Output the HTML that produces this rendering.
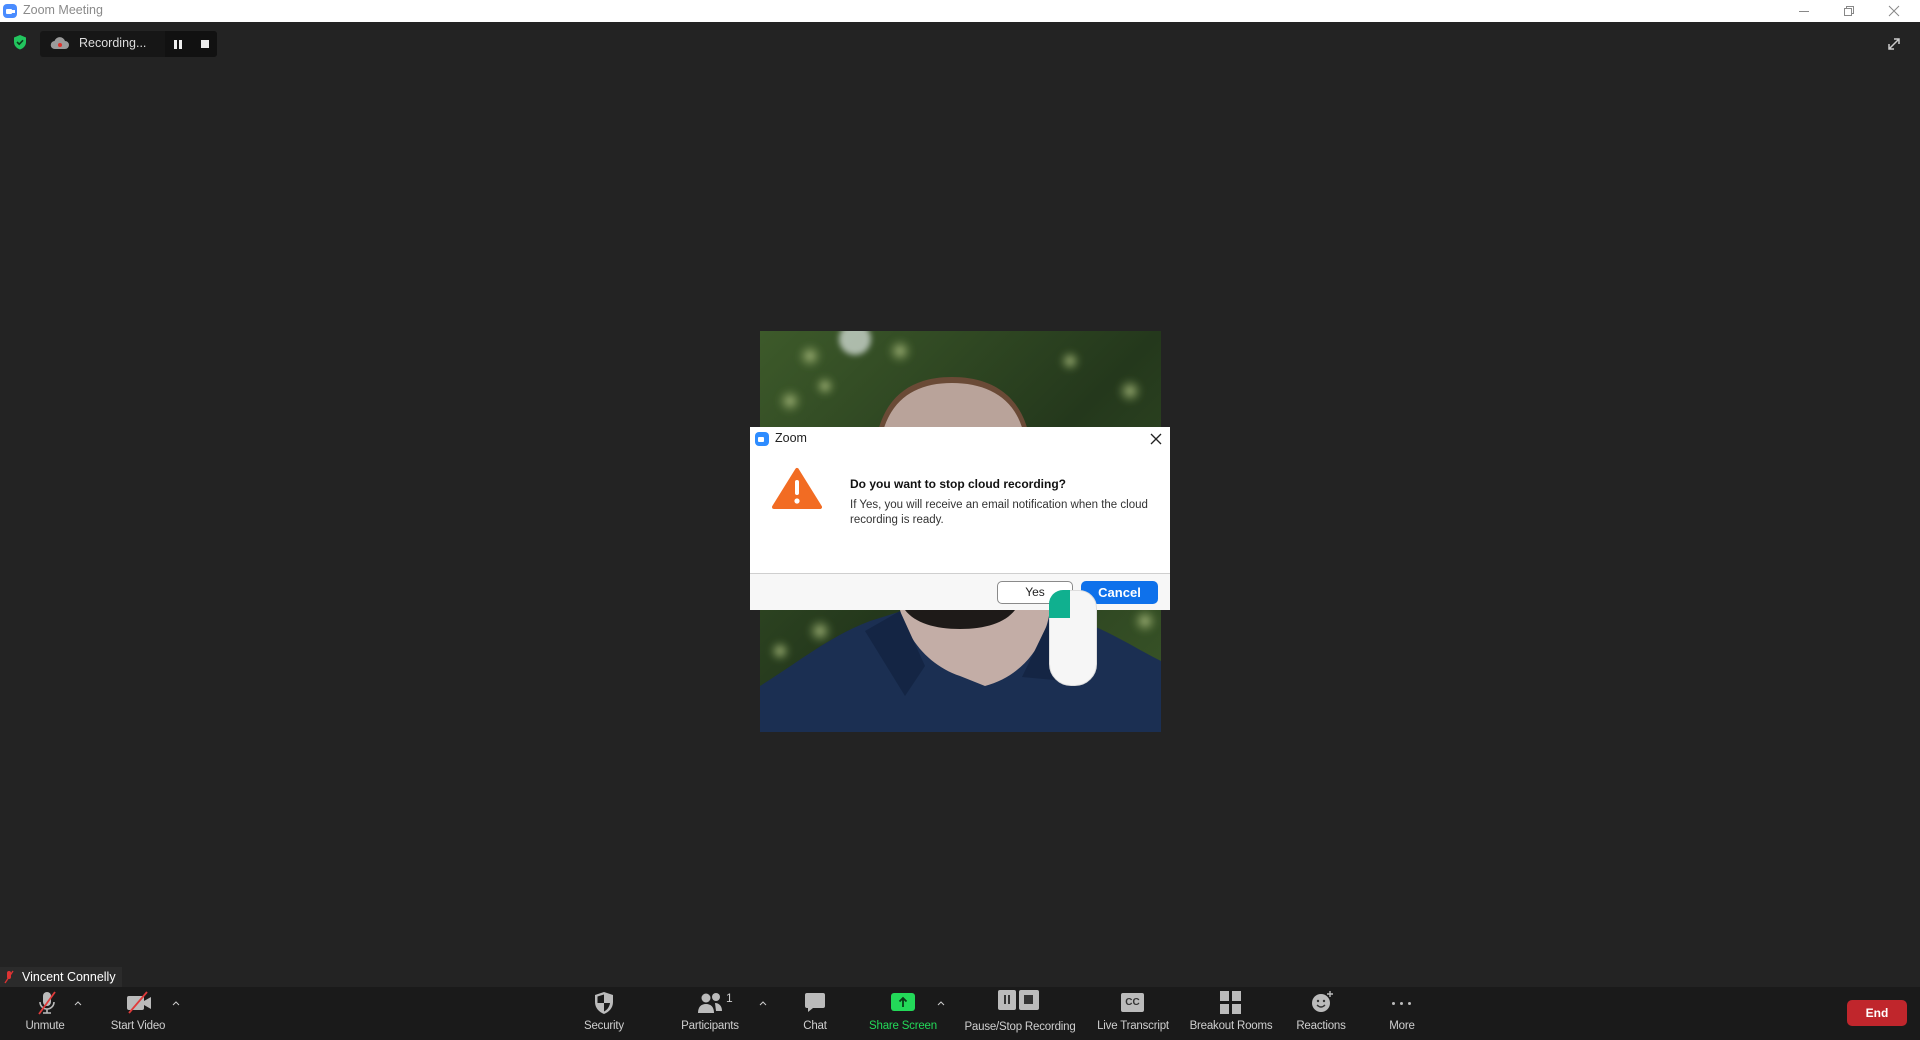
<!DOCTYPE html>
<html><head><meta charset="utf-8"><style>
*{margin:0;padding:0;box-sizing:border-box}
body{width:1920px;height:1040px;background:#232323;font-family:"Liberation Sans",sans-serif;position:relative;overflow:hidden}
.abs{position:absolute}
.tb{left:0;top:0;width:1920px;height:22px;background:#fff}
.lbl{color:#cfcfcf;font-size:11.5px;text-align:center;width:140px;position:absolute;top:1020px;letter-spacing:-0.2px}
</style></head><body>
<div class="abs tb">
 <div class="abs" style="left:3px;top:4px;width:14px;height:14px;border-radius:4px;background:#4a8cff"></div>
 <div class="abs" style="left:6px;top:9px;width:6px;height:5px;background:#fff;border-radius:1px"></div>
 <div class="abs" style="left:12px;top:10px;width:3px;height:3px;background:#fff"></div>
 <div class="abs" style="left:23px;top:3px;font-size:12.5px;color:#8a8a8a">Zoom Meeting</div>
 <svg class="abs" style="left:1780px;top:3px" width="140" height="16"><g stroke="#888" fill="none" stroke-width="1"><line x1="19" y1="8.5" x2="29" y2="8.5"/><rect x="64.5" y="5.5" width="7" height="7"/><path d="M66.5 5.5V3.5h7v7h-2"/><path d="M109 3l10 10M119 3l-10 10"/></g></svg>
</div>
<svg class="abs" style="left:13px;top:35px" width="14" height="15"><path d="M7 0L13 2.5V7c0 4-3 6.5-6 7.5C4 13.5 1 11 1 7V2.5z" fill="#22c55e"/><path d="M4 7l2.2 2.2L10 5.3" stroke="#0b3d1d" stroke-width="1.6" fill="none"/></svg>
<div class="abs" style="left:40px;top:31px;width:177px;height:26px;background:#161616;border-radius:3px"></div>
<div class="abs" style="left:165px;top:31px;width:52px;height:26px;background:#111;border-radius:0 3px 3px 0"></div>
<svg class="abs" style="left:50px;top:36px" width="20" height="14"><path d="M5 13a4 4 0 0 1-.5-8A5.5 5.5 0 0 1 15 5a4 4 0 0 1 0 8z" fill="#9a9a9a"/><circle cx="10" cy="9" r="2" fill="#e0302a"/></svg>
<div class="abs" style="left:79px;top:36px;color:#ddd;font-size:12.5px">Recording...</div>
<div class="abs" style="left:174px;top:40px;width:3px;height:9px;background:#eee"></div>
<div class="abs" style="left:179px;top:40px;width:3px;height:9px;background:#eee"></div>
<div class="abs" style="left:201px;top:40px;width:8px;height:8px;background:#eee"></div>
<svg class="abs" style="left:1886px;top:36px" width="16" height="16"><g stroke="#ccc" stroke-width="1.5" fill="none"><path d="M3 13L13 3M8 3h5v5M3 8v5h5"/></g></svg>

<svg class="abs" style="left:760px;top:331px" width="401" height="401">
 <defs>
  <radialGradient id="bk" cx="0.5" cy="0.5" r="0.5"><stop offset="0" stop-color="#b8c98a" stop-opacity=".8"/><stop offset="1" stop-color="#5d7a3a" stop-opacity="0"/></radialGradient>
  <linearGradient id="bg" x1="0" y1="0" x2="1" y2="1"><stop offset="0" stop-color="#3d5a2a"/><stop offset=".5" stop-color="#24381c"/><stop offset="1" stop-color="#3a5628"/></linearGradient>
  <filter id="bl"><feGaussianBlur stdDeviation="3"/></filter>
 </defs>
 <rect width="401" height="401" fill="url(#bg)"/>
 <g filter="url(#bl)">
 <circle cx="50" cy="25" r="14" fill="url(#bk)"/><circle cx="95" cy="8" r="16" fill="#dfe8e4" opacity=".7"/><circle cx="140" cy="20" r="14" fill="url(#bk)"/>
 <circle cx="30" cy="70" r="14" fill="url(#bk)"/><circle cx="65" cy="55" r="12" fill="url(#bk)"/><circle cx="310" cy="30" r="12" fill="url(#bk)"/><circle cx="370" cy="60" r="14" fill="url(#bk)"/>
 <circle cx="60" cy="300" r="14" fill="url(#bk)"/><circle cx="20" cy="320" r="12" fill="url(#bk)"/><circle cx="385" cy="290" r="14" fill="url(#bk)"/>
 </g>
 <path d="M118 100C128 62 155 46 192 46S258 62 268 100z" fill="#6a4a36"/>
 <path d="M123 100C133 66 158 52 192 52S254 66 263 100z" fill="#b9a39a"/>
 <path d="M0 401V355C40 330 70 305 110 290L145 279H285L320 290C350 300 380 320 401 330V401z" fill="#1b2f52"/>
 <path d="M140 279H290C285 315 262 345 225 355L200 345C170 335 148 310 140 279z" fill="#c3ada6"/>
 <path d="M145 279H255C245 292 225 298 200 298S155 292 145 279z" fill="#1e1a18"/>
 <path d="M105 300L140 280L165 335L145 365z" fill="#142544"/><path d="M290 288L322 300L305 350L262 346z" fill="#142544"/>
</svg>

<div class="abs" style="left:750px;top:427px;width:420px;height:183px;background:#fff">
 <div class="abs" style="left:5px;top:5px;width:14px;height:14px;border-radius:4px;background:#2d8cff"></div>
 <div class="abs" style="left:8px;top:10px;width:6px;height:5px;background:#fff;border-radius:1px"></div>
 <div class="abs" style="left:25px;top:4px;font-size:12.5px;color:#222">Zoom</div>
 <svg class="abs" style="left:400px;top:6px" width="12" height="12"><path d="M1 1l10 10M11 1L1 11" stroke="#222" stroke-width="1.3"/></svg>
 <svg class="abs" style="left:22px;top:40px" width="50" height="44"><path d="M25 3L48 40H2z" fill="#f26c23" stroke="#f26c23" stroke-width="4" stroke-linejoin="round"/><rect x="23" y="13" width="4" height="15" rx="2" fill="#fff"/><circle cx="25" cy="34" r="2.6" fill="#fff"/></svg>
 <div class="abs" style="left:100px;top:50px;font-size:12px;font-weight:bold;color:#111">Do you want to stop cloud recording?</div>
 <div class="abs" style="left:100px;top:71px;font-size:11.5px;color:#333;line-height:15px;width:300px">If Yes, you will receive an email notification when the cloud recording is ready.</div>
 <div class="abs" style="left:0;top:146px;width:420px;height:37px;background:#f7f7f7;border-top:1px solid #cfcfcf"></div>
 <div class="abs" style="left:247px;top:154px;width:76px;height:23px;border:1px solid #8a8a8a;border-radius:5px;background:#fff;font-size:12px;color:#222;text-align:center;line-height:21px">Yes</div>
 <div class="abs" style="left:331px;top:154px;width:77px;height:23px;border-radius:5px;background:#0e71eb;font-size:13px;font-weight:bold;color:#fff;text-align:center;line-height:23px">Cancel</div>
</div>
<div class="abs" style="left:1049px;top:590px;width:48px;height:96px;border-radius:18px 18px 22px 22px;background:#f6f6f6;border:1px solid #ddd"></div>
<div class="abs" style="left:1049px;top:590px;width:21px;height:28px;border-radius:14px 0 0 0;background:#10b08f"></div>

<div class="abs" style="left:0;top:967px;width:122px;height:20px;background:#2b2b2b"></div>
<svg class="abs" style="left:4px;top:970px" width="10" height="14"><rect x="3" y="1" width="4" height="8" rx="2" fill="#d33"/><path d="M1 13L9 1" stroke="#d33" stroke-width="1.3"/></svg>
<div class="abs" style="left:22px;top:970px;font-size:12.5px;color:#fff">Vincent Connelly</div>

<div class="abs" style="left:0;top:987px;width:1920px;height:53px;background:#1a1a1a"></div>
<svg class="abs" style="left:35px;top:990px" width="24" height="26"><rect x="8" y="2" width="8" height="14" rx="4" fill="#bbb"/><path d="M5 12a7 7 0 0 0 14 0M12 19v4M8 23h8" stroke="#bbb" stroke-width="1.6" fill="none"/><path d="M4 24L20 2" stroke="#e03a3a" stroke-width="1.8"/></svg>
<svg class="abs" style="left:74px;top:1000px" width="8" height="6"><path d="M1 5l3-3 3 3" stroke="#ccc" fill="none"/></svg>
<svg class="abs" style="left:125px;top:991px" width="28" height="24"><rect x="2" y="5" width="17" height="14" rx="2" fill="#bbb"/><path d="M19 10l7-4v12l-7-4z" fill="#bbb"/><path d="M4 22L22 1" stroke="#e03a3a" stroke-width="1.8"/></svg>
<svg class="abs" style="left:172px;top:1000px" width="8" height="6"><path d="M1 5l3-3 3 3" stroke="#ccc" fill="none"/></svg>
<div class="lbl" style="left:-25px">Unmute</div>
<div class="lbl" style="left:68px">Start Video</div>

<svg class="abs" style="left:594px;top:991px" width="20" height="24"><path d="M10 1L19 4v7c0 6-4 10-9 12C5 21 1 17 1 11V4z" fill="#bbb"/><path d="M10 4v8H3.5V5.5L10 3.5zM10 12h6c-.5 4-3 7-6 8.5z" fill="#1a1a1a"/></svg>
<div class="lbl" style="left:534px">Security</div>
<svg class="abs" style="left:697px;top:992px" width="30" height="22"><circle cx="9" cy="6" r="4.5" fill="#bbb"/><path d="M1 21c0-6 3-9 8-9s8 3 8 9z" fill="#bbb"/><circle cx="19" cy="5" r="4" fill="#bbb"/><path d="M18 11c4 0 7 3 7 8h-6" fill="#bbb"/></svg>
<div class="abs" style="left:726px;top:991px;font-size:12px;color:#ccc">1</div>
<svg class="abs" style="left:759px;top:1000px" width="8" height="6"><path d="M1 5l3-3 3 3" stroke="#ccc" fill="none"/></svg>
<div class="lbl" style="left:640px">Participants</div>
<svg class="abs" style="left:804px;top:992px" width="22" height="22"><path d="M3 1h16a2 2 0 0 1 2 2v11a2 2 0 0 1-2 2H9l-5 4v-4H3a2 2 0 0 1-2-2V3a2 2 0 0 1 2-2z" fill="#bbb"/></svg>
<div class="lbl" style="left:745px">Chat</div>
<div class="abs" style="left:891px;top:993px;width:24px;height:18px;border-radius:3px;background:#23d959"></div>
<svg class="abs" style="left:897px;top:995px" width="12" height="14"><path d="M6 12V3M2.5 6.5L6 3l3.5 3.5" stroke="#0a3a18" stroke-width="1.8" fill="none"/></svg>
<svg class="abs" style="left:937px;top:1000px" width="8" height="6"><path d="M1 5l3-3 3 3" stroke="#ccc" fill="none"/></svg>
<div class="lbl" style="left:833px;color:#23d959">Share Screen</div>
<div class="abs" style="left:998px;top:990px;width:18px;height:20px;background:#bbb;border-radius:2px"></div>
<div class="abs" style="left:1019px;top:990px;width:20px;height:20px;background:#bbb;border-radius:2px"></div>
<div class="abs" style="left:1004px;top:995px;width:2px;height:9px;background:#333"></div><div class="abs" style="left:1008px;top:995px;width:2px;height:9px;background:#333"></div>
<div class="abs" style="left:1024px;top:995px;width:9px;height:9px;background:#333"></div>
<div class="lbl" style="left:950px;top:1021px">Pause/Stop Recording</div>
<div class="abs" style="left:1121px;top:993px;width:23px;height:19px;background:#bbb;border-radius:2px;font-size:10px;font-weight:bold;color:#333;text-align:center;line-height:19px">CC</div>
<div class="lbl" style="left:1063px">Live Transcript</div>
<div class="abs" style="left:1220px;top:991px;width:9px;height:10px;background:#bbb"></div><div class="abs" style="left:1232px;top:991px;width:9px;height:10px;background:#bbb"></div>
<div class="abs" style="left:1220px;top:1004px;width:9px;height:10px;background:#bbb"></div><div class="abs" style="left:1232px;top:1004px;width:9px;height:10px;background:#bbb"></div>
<div class="lbl" style="left:1161px">Breakout Rooms</div>
<svg class="abs" style="left:1311px;top:990px" width="24" height="24"><circle cx="10" cy="13" r="9" fill="#bbb"/><circle cx="7" cy="11" r="1.2" fill="#333"/><circle cx="13" cy="11" r="1.2" fill="#333"/><path d="M6 15q4 4 8 0" stroke="#333" fill="none" stroke-width="1.3"/><path d="M19 1v6M16 4h6" stroke="#bbb" stroke-width="1.4"/></svg>
<div class="lbl" style="left:1251px">Reactions</div>
<div class="abs" style="left:1392px;top:1002px;width:3px;height:3px;background:#bbb;border-radius:2px"></div><div class="abs" style="left:1400px;top:1002px;width:3px;height:3px;background:#bbb;border-radius:2px"></div><div class="abs" style="left:1408px;top:1002px;width:3px;height:3px;background:#bbb;border-radius:2px"></div>
<div class="lbl" style="left:1332px">More</div>
<div class="abs" style="left:1847px;top:1000px;width:60px;height:26px;border-radius:5px;background:#c0262c;color:#fff;font-size:12px;font-weight:bold;text-align:center;line-height:26px">End</div>
</body></html>
